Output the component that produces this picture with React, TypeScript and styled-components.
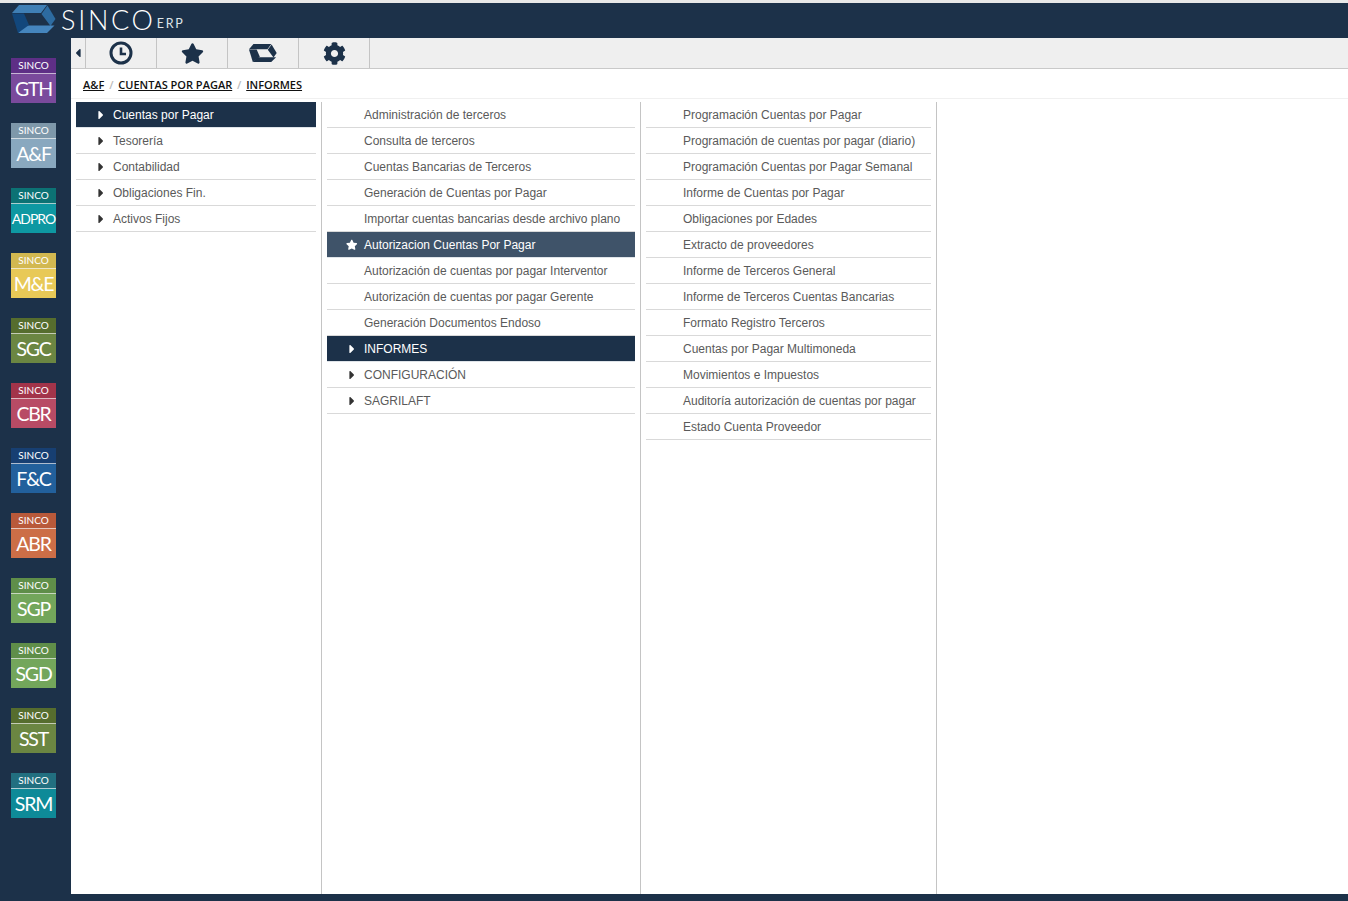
import React from "react";
import styled, { createGlobalStyle } from "styled-components";
import { FaStar, FaCog, FaCaretRight, FaCaretLeft } from "react-icons/fa";

const navy = "#1c3149";

const Global = createGlobalStyle`
  html, body {
    margin: 0;
    padding: 0;
    height: 100%;
    background: ${navy};
    overflow: hidden;
  }
  #root { height: 100%; }
`;

const Page = styled.div`
  width: 1348px;
  height: 901px;
  box-sizing: border-box;
  display: flex;
  flex-direction: column;
  background: ${navy};
  border-top: 3px solid #e8e8e8;
  padding-bottom: 7px;
  font-family: "Liberation Sans", Arial, sans-serif;
`;
const TopBar = styled.div`
  height: 35px;
  flex: none;
  display: flex;
  align-items: center;
  padding: 0 0 4px 12px;
  box-sizing: border-box;
`;
const LogoText = styled.span`
  font-family: Lato, "Liberation Sans", sans-serif;
  font-size: 27px;
  font-weight: 300;
  letter-spacing: 2.7px;
  color: #fff;
  margin-left: 5px;
  margin-top: 2px;
  line-height: 31px;
`;
const LogoSub = styled.span`
  font-family: Lato, "Liberation Sans", sans-serif;
  font-size: 12.5px;
  letter-spacing: 1.8px;
  color: #dfe5ea;
  margin-left: 1px;
  margin-top: 10px;
`;
const Body = styled.div`
  flex: 1;
  display: flex;
  min-height: 0;
`;
const Apps = styled.nav`
  width: 71px;
  flex: none;
  display: flex;
  flex-direction: column;
  gap: 20px;
  padding: 20px 0 0 11px;
  box-sizing: border-box;
`;
const AppTile = styled.div<{ $top: string; $bottom: string; $small?: boolean }>`
  width: 45px;
  height: 45px;
  display: flex;
  flex-direction: column;
  color: #fff;
  background: ${(p) => p.$bottom};

  & > span {
    height: 15px;
    background: ${(p) => p.$top};
    border-bottom: 1px solid rgba(255, 255, 255, 0.65);
    font-family: Lato, "Liberation Sans", sans-serif;
    font-size: 10px;
    line-height: 15px;
    text-align: center;
  }
  & > b {
    flex: 1;
    font-family: Lato, "Liberation Sans", sans-serif;
    font-weight: 400;
    font-size: ${(p) => (p.$small ? 14 : 19.5)}px;
    line-height: 29px;
    letter-spacing: ${(p) => (p.$small ? -1 : -1.2)}px;
    text-align: center;
    white-space: nowrap;
  }
`;
const Main = styled.main`
  flex: 1;
  display: flex;
  flex-direction: column;
  background: #fff;
  min-width: 0;
`;
const Toolbar = styled.div`
  height: 31px;
  flex: none;
  box-sizing: border-box;
  display: flex;
  background: #efefef;
  border-bottom: 1px solid #c9c9c9;
`;
const Collapse = styled.div`
  width: 15px;
  box-sizing: border-box;
  border-right: 1px solid #c4c4c4;
  display: flex;
  align-items: center;
  justify-content: center;
  color: ${navy};
  font-size: 14px;
`;
const ToolButton = styled.div`
  width: 71px;
  box-sizing: border-box;
  border-right: 1px solid #c4c4c4;
  display: flex;
  align-items: center;
  justify-content: center;
  color: ${navy};
`;
const Crumbs = styled.div`
  height: 30px;
  flex: none;
  box-sizing: border-box;
  border-bottom: 1px solid #f0f0f0;
  padding-left: 12px;
  font-family: "Open Sans", "Liberation Sans", sans-serif;
  font-size: 11px;
  font-weight: 600;
  line-height: 32px;
  color: #bbb;
  white-space: nowrap;

  & > a {
    color: #111;
    text-decoration: underline;
  }
  & > i {
    font-style: normal;
    margin: 0 2px;
  }
`;
const Columns = styled.div`
  flex: 1;
  display: flex;
  min-height: 0;
  padding-top: 3px;
`;
const Column = styled.div<{ $width: number; $border?: boolean }>`
  width: ${(p) => p.$width}px;
  flex: none;
  box-sizing: border-box;
  padding: 0 5px;
  border-right: ${(p) => (p.$border ? "1px solid #c4c4c4" : "none")};
`;
const Row = styled.div<{ $variant?: "active" | "fav"; $indent: number }>`
  height: 26px;
  box-sizing: border-box;
  display: flex;
  align-items: center;
  padding-left: ${(p) => p.$indent}px;
  font-size: 12px;
  white-space: nowrap;
  position: relative;
  border-bottom: 1px solid ${(p) => (p.$variant ? "#dfe4e9" : "#d9d9d9")};
  color: ${(p) => (p.$variant ? "#fff" : "#5a5a5a")};
  background: ${(p) =>
    p.$variant === "active" ? navy : p.$variant === "fav" ? "#3f5369" : "transparent"};
`;
const Marker = styled.span<{ $light?: boolean; $size: number }>`
  position: absolute;
  left: 19px;
  top: 6px;
  width: 12px;
  height: 13px;
  display: flex;
  align-items: center;
  justify-content: center;
  color: ${(p) => (p.$light ? "#fff" : "#333")};
  font-size: ${(p) => p.$size}px;
`;

type MarkColors = { top: string; right: string; bottom: string; left: string };

const LogoMark = ({ w, h, colors }: { w: number; h: number; colors: MarkColors }) => (
  <svg width={w} height={h} viewBox="0 0 44 28">
    <polygon points="0,8 7,0 35,0 29,8" fill={colors.top} />
    <polygon points="35.5,0.5 43.5,14 38.5,21 29.5,9" fill={colors.right} />
    <polygon points="6,28 13,20.5 42.5,20.5 35,28" fill={colors.bottom} />
    <polygon points="0,8.5 12,8.5 17,20 6,28" fill={colors.left} />
  </svg>
);

const ClockIcon = () => (
  <svg width="24" height="24" viewBox="0 0 24 24" fill="none" stroke={navy} strokeWidth="3">
    <circle cx="12" cy="12" r="10" />
    <path d="M12 6.5V13H17" strokeWidth="2.6" />
  </svg>
);

const apps = [
  ["GTH", "#5e2f86", "#7a4a9c"],
  ["A&F", "#7e98aa", "#89a8bf"],
  ["ADPRO", "#0c7274", "#0e98a2"],
  ["M&E", "#d2b850", "#e8c957"],
  ["SGC", "#566d2e", "#6b8642"],
  ["CBR", "#a2344a", "#b84b65"],
  ["F&C", "#173f72", "#22609c"],
  ["ABR", "#b8593a", "#cc6e47"],
  ["SGP", "#5f8e49", "#73a65b"],
  ["SGD", "#5f8e49", "#73a65b"],
  ["SST", "#566d2e", "#6b8642"],
  ["SRM", "#226f80", "#0e8a98"],
];

type Item = { label: string; variant?: "active" | "fav"; sub?: boolean; fav?: boolean };

const first: Item[] = [
  { label: "Cuentas por Pagar", variant: "active", sub: true },
  { label: "Tesorería", sub: true },
  { label: "Contabilidad", sub: true },
  { label: "Obligaciones Fin.", sub: true },
  { label: "Activos Fijos", sub: true },
];
const second: Item[] = [
  { label: "Administración de terceros" },
  { label: "Consulta de terceros" },
  { label: "Cuentas Bancarias de Terceros" },
  { label: "Generación de Cuentas por Pagar" },
  { label: "Importar cuentas bancarias desde archivo plano" },
  { label: "Autorizacion Cuentas Por Pagar", variant: "fav", fav: true },
  { label: "Autorización de cuentas por pagar Interventor" },
  { label: "Autorización de cuentas por pagar Gerente" },
  { label: "Generación Documentos Endoso" },
  { label: "INFORMES", variant: "active", sub: true },
  { label: "CONFIGURACIÓN", sub: true },
  { label: "SAGRILAFT", sub: true },
];
const third: Item[] = [
  { label: "Programación Cuentas por Pagar" },
  { label: "Programación de cuentas por pagar (diario)" },
  { label: "Programación Cuentas por Pagar Semanal" },
  { label: "Informe de Cuentas por Pagar" },
  { label: "Obligaciones por Edades" },
  { label: "Extracto de proveedores" },
  { label: "Informe de Terceros General" },
  { label: "Informe de Terceros Cuentas Bancarias" },
  { label: "Formato Registro Terceros" },
  { label: "Cuentas por Pagar Multimoneda" },
  { label: "Movimientos e Impuestos" },
  { label: "Auditoría autorización de cuentas por pagar" },
  { label: "Estado Cuenta Proveedor" },
];

const MenuList = ({ items }: { items: Item[] }) => (
  <>
    {items.map((item) => (
      <Row key={item.label} $variant={item.variant} $indent={37}>
        {item.sub && (
          <Marker $light={!!item.variant} $size={14}>
            <FaCaretRight />
          </Marker>
        )}
        {item.fav && (
          <Marker $light $size={11.5}>
            <FaStar />
          </Marker>
        )}
        {item.label}
      </Row>
    ))}
  </>
);

export default function App() {
  return (
    <Page>
      <Global />
      <TopBar>
        <LogoMark
          w={44}
          h={28}
          colors={{ top: "#3f7fb5", right: "#2d6ba0", bottom: "#4585bd", left: "#12477c" }}
        />
        <LogoText>SINCO</LogoText>
        <LogoSub>ERP</LogoSub>
      </TopBar>
      <Body>
        <Apps>
          {apps.map(([name, top, bottom]) => (
            <AppTile key={name} $top={top} $bottom={bottom} $small={name.length > 3}>
              <span>SINCO</span>
              <b>{name}</b>
            </AppTile>
          ))}
        </Apps>
        <Main>
          <Toolbar>
            <Collapse>
              <FaCaretLeft />
            </Collapse>
            <ToolButton>
              <ClockIcon />
            </ToolButton>
            <ToolButton>
              <FaStar size={23} />
            </ToolButton>
            <ToolButton>
              <LogoMark w={28} h={18} colors={{ top: navy, right: navy, bottom: navy, left: navy }} />
            </ToolButton>
            <ToolButton>
              <FaCog size={23} />
            </ToolButton>
          </Toolbar>
          <Crumbs>
            <a>A&amp;F</a> <i>/</i> <a>CUENTAS POR PAGAR</a> <i>/</i> <a>INFORMES</a>
          </Crumbs>
          <Columns>
            <Column $width={251} $border>
              <MenuList items={first} />
            </Column>
            <Column $width={319} $border>
              <MenuList items={second} />
            </Column>
            <Column $width={296} $border>
              <MenuList items={third} />
            </Column>
          </Columns>
        </Main>
      </Body>
    </Page>
  );
}
